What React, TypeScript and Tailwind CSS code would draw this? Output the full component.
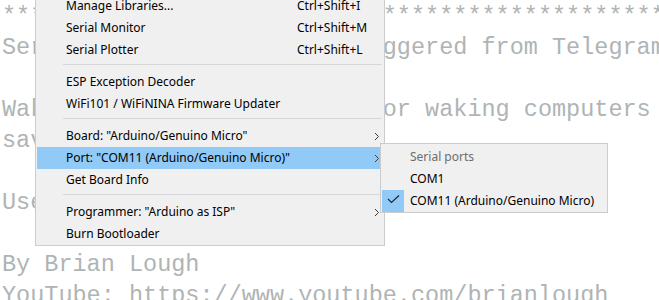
import React from "react";

// Arduino IDE "Tools" menu open over the sketch comment header, Port submenu expanded.

const EDITOR_LINES = [
  "********************************************************",
  "Serial output that gets triggered from Telegram",
  "",
  "Wake on LAN functionality for waking computers up",
  "saving power.",
  "",
  "Useful for home servers",
  "",
  "By Brian Lough",
  "YouTube: https://www.youtube.com/brianlough",
];

type Item =
  | { kind: "item"; label: string; shortcut?: string; sub?: boolean; active?: boolean }
  | { kind: "sep" };

const TOOLS: Item[] = [
  { kind: "item", label: "Manage Libraries...", shortcut: "Ctrl+Shift+I" },
  { kind: "item", label: "Serial Monitor", shortcut: "Ctrl+Shift+M" },
  { kind: "item", label: "Serial Plotter", shortcut: "Ctrl+Shift+L" },
  { kind: "sep" },
  { kind: "item", label: "ESP Exception Decoder" },
  { kind: "item", label: "WiFi101 / WiFiNINA Firmware Updater" },
  { kind: "sep" },
  { kind: "item", label: 'Board: "Arduino/Genuino Micro"', sub: true },
  { kind: "item", label: 'Port: "COM11 (Arduino/Genuino Micro)"', sub: true, active: true },
  { kind: "item", label: "Get Board Info" },
  { kind: "sep" },
  { kind: "item", label: 'Programmer: "Arduino as ISP"', sub: true },
  { kind: "item", label: "Burn Bootloader" },
];

function Chevron() {
  return (
    <svg width="6" height="9" viewBox="0 0 6 9" className="mr-[3px] flex-none">
      <polyline points="1,1 4.5,4.5 1,8" fill="none" stroke="#3c3c3c" strokeWidth="1" />
    </svg>
  );
}

function Check() {
  return (
    <svg width="22" height="22" viewBox="0 0 22 22">
      <polyline points="6,9 9.5,12.5 17,5.5" fill="none" stroke="#222" strokeWidth="1.1" />
    </svg>
  );
}

export default function App() {
  return (
    <div className="relative h-[300px] w-[659px] overflow-hidden bg-white">
      <pre
        className="m-0 pl-[2px] pt-px text-[23.5px] leading-[31px] text-[#afb4b4]"
        style={{ fontFamily: '"Liberation Mono", "Courier New", monospace' }}
      >
        {EDITOR_LINES.map((l, i) => (
          <div key={i} className="h-[31px] whitespace-pre">
            {l}
          </div>
        ))}
      </pre>

      {/* Tools menu */}
      <div
        className="absolute left-[35px] top-[-6px] w-[350px] border border-[#cccccc] bg-[#f0f0f0] px-px text-[12px] text-black"
        style={{ fontFamily: '"Noto Sans", "Segoe UI", sans-serif' }}
      >
        {TOOLS.map((it, i) =>
          it.kind === "sep" ? (
            <div key={i} className="h-[10px] pt-[3px] pl-[26px] pr-px">
              <div className="h-px bg-[#d7d7d7]" />
            </div>
          ) : (
            <div
              key={i}
              className={`flex h-[22px] items-center ${it.active ? "bg-[#91c9f7]" : ""}`}
            >
              <span className="w-[29px] flex-none" />
              <span className="flex-1 whitespace-nowrap">{it.label}</span>
              {it.shortcut && <span className="w-[86px] flex-none whitespace-nowrap">{it.shortcut}</span>}
              {it.sub && <Chevron />}
            </div>
          )
        )}
      </div>

      {/* Port submenu */}
      <div
        className="absolute left-[380px] top-[143px] w-[228px] border border-[#cccccc] bg-[#f0f0f0] px-px pt-[2px] text-[12px] text-black"
        style={{ fontFamily: '"Noto Sans", "Segoe UI", sans-serif' }}
      >
        <div className="flex h-[22px] items-center">
          <span className="w-[28px] flex-none" />
          <span className="text-[#6d6d6d]">Serial ports</span>
        </div>
        <div className="flex h-[22px] items-center">
          <span className="w-[28px] flex-none" />
          <span>COM1</span>
        </div>
        <div className="flex h-[22px] items-center">
          <span className="mr-[6px] flex h-[22px] w-[22px] flex-none items-center justify-center bg-[#91c9f7]">
            <Check />
          </span>
          <span>COM11 (Arduino/Genuino Micro)</span>
        </div>
      </div>
    </div>
  );
}
